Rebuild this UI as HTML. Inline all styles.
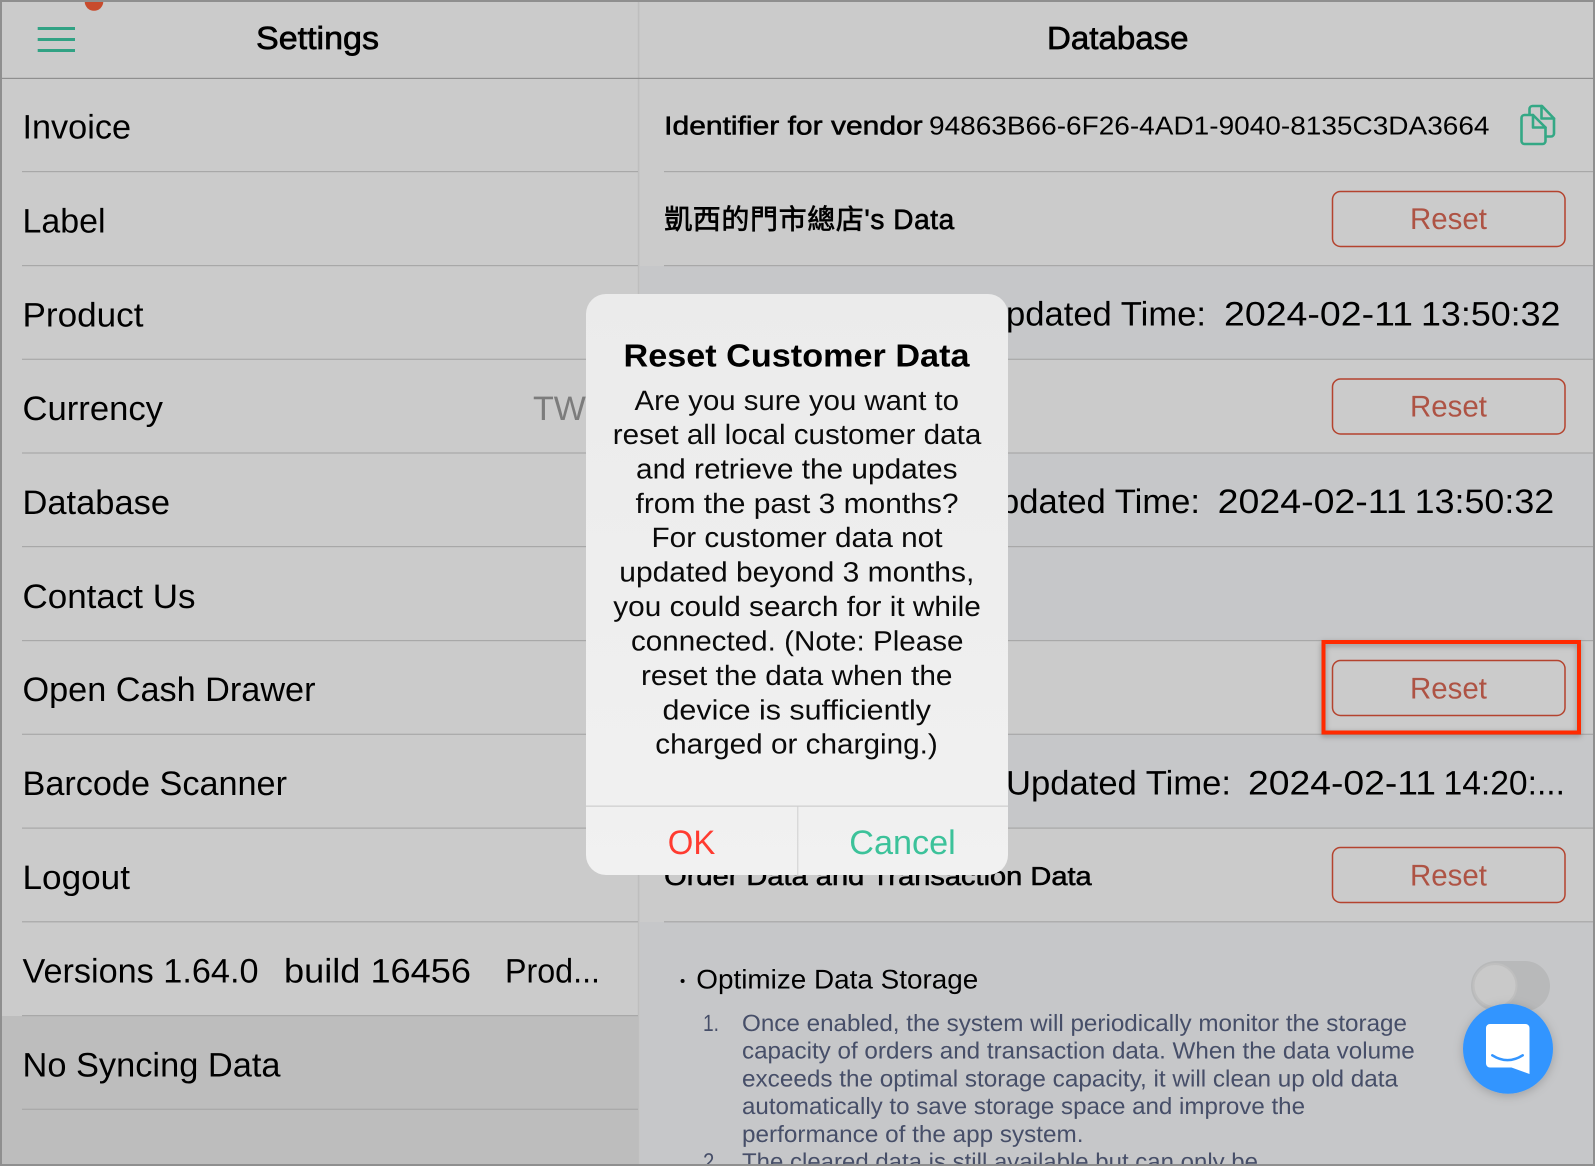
<!DOCTYPE html>
<html><head><meta charset="utf-8"><title>Settings</title>
<style>
html,body{margin:0;padding:0;background:#cbcbcb}
svg{display:block}
text{font-family:"Liberation Sans","Noto Sans CJK TC",sans-serif;text-rendering:geometricPrecision;fill:#000}
.r{font-size:34px}
.m{stroke:#000;stroke-width:.55px}
.s{font-size:26px}
.l{font-size:23.5px;fill:#464e68}
.d{font-size:28px;fill:#0a0a0a}
.b{font-size:30px;fill:#ae5344}
.line{fill:#a8a8a8}
.btn{fill:none;stroke:#b4432e;stroke-width:1.5}
</style></head><body>
<svg xmlns="http://www.w3.org/2000/svg" width="1595" height="1166" viewBox="0 0 1595 1166">
<defs>
<linearGradient id="dg" x1="0" y1="0" x2="0" y2="1"><stop offset="0" stop-color="#ebebeb"/><stop offset="1" stop-color="#f1f1f1"/></linearGradient>
<filter id="sh" x="-10%" y="-10%" width="120%" height="130%"><feDropShadow dx="0" dy="2" stdDeviation="3" flood-color="#000" flood-opacity=".3"/></filter>
<filter id="sh2" x="-30%" y="-30%" width="160%" height="160%"><feDropShadow dx="0" dy="2" stdDeviation="5" flood-color="#000" flood-opacity=".2"/></filter>
<clipPath id="clip"><rect x="0" y="0" width="1595" height="1164"/></clipPath>
</defs>
<rect width="1595" height="1166" fill="#cbcbcb"/>
<!-- right panel shades -->
<rect x="640" y="266" width="955" height="93" fill="#c6c7c9"/>
<rect x="640" y="453" width="955" height="187" fill="#c6c7c9"/>
<rect x="640" y="734" width="955" height="94" fill="#c6c7c9"/>
<rect x="640" y="922" width="955" height="244" fill="#c6c7c9"/>
<!-- selected row -->
<rect x="0" y="1016" width="638" height="150" fill="#bdbdbd"/>
<!-- divider -->
<rect x="637.800" y="0" width="1.600" height="1166" fill="#bebebe"/>
<!-- header line -->
<rect x="0" y="77.800" width="1595" height="1.200" fill="#8f8f8f"/>
<!-- sidebar lines -->
<rect class="line" x="22" y="171" width="616" height="1.200"/>
<rect class="line" x="22" y="265" width="616" height="1.200"/>
<rect class="line" x="22" y="358.700" width="616" height="1.200"/>
<rect class="line" x="22" y="452.400" width="616" height="1.200"/>
<rect class="line" x="22" y="546" width="616" height="1.200"/>
<rect class="line" x="22" y="640" width="616" height="1.200"/>
<rect class="line" x="22" y="733.700" width="616" height="1.200"/>
<rect class="line" x="22" y="827.500" width="616" height="1.200"/>
<rect class="line" x="22" y="921.200" width="616" height="1.200"/>
<rect class="line" x="22" y="1015" width="616" height="1.200"/>
<rect class="line" x="22" y="1108.700" width="616" height="1.200"/>
<!-- right lines -->
<rect class="line" x="664" y="171" width="931" height="1.200"/>
<rect class="line" x="664" y="265" width="931" height="1.200"/>
<rect class="line" x="664" y="358.700" width="931" height="1.200"/>
<rect class="line" x="664" y="452.400" width="931" height="1.200"/>
<rect class="line" x="664" y="546" width="931" height="1.200"/>
<rect class="line" x="664" y="640" width="931" height="1.200"/>
<rect class="line" x="664" y="733.700" width="931" height="1.200"/>
<rect class="line" x="664" y="827.500" width="931" height="1.200"/>
<rect class="line" x="664" y="921.200" width="931" height="1.200"/>
<!-- header -->
<rect x="37.700" y="27" width="37.300" height="3" fill="#31a284"/>
<rect x="37.700" y="38" width="37.300" height="3" fill="#31a284"/>
<rect x="37.700" y="49" width="37.300" height="3" fill="#31a284"/>
<circle cx="94" cy="1.500" r="9.300" fill="#c84b2d"/>
<text class="m" x="256" y="49" font-size="32" style="stroke-width:.7px" textLength="123" lengthAdjust="spacingAndGlyphs">Settings</text>
<text class="m" x="1047" y="49" font-size="32" style="stroke-width:.7px" textLength="141.500" lengthAdjust="spacingAndGlyphs">Database</text>
<!-- sidebar -->
<text class="r" x="22.500" y="138.700" textLength="108.500" lengthAdjust="spacingAndGlyphs">Invoice</text>
<text class="r" x="22.500" y="232.500" textLength="83" lengthAdjust="spacingAndGlyphs">Label</text>
<text class="r" x="22.500" y="326.400" textLength="121" lengthAdjust="spacingAndGlyphs">Product</text>
<text class="r" x="22.500" y="420.200" textLength="140.500" lengthAdjust="spacingAndGlyphs">Currency</text>
<text class="r" x="533" y="420.200" style="fill:#7c7c7c">TW</text>
<text class="r" x="22.500" y="514" textLength="147.500" lengthAdjust="spacingAndGlyphs">Database</text>
<text class="r" x="22.500" y="607.800" textLength="173" lengthAdjust="spacingAndGlyphs">Contact Us</text>
<text class="r" x="22.500" y="700.800" textLength="293" lengthAdjust="spacingAndGlyphs">Open Cash Drawer</text>
<text class="r" x="22.500" y="795" textLength="264.500" lengthAdjust="spacingAndGlyphs">Barcode Scanner</text>
<text class="r" x="22.500" y="889" textLength="107.500" lengthAdjust="spacingAndGlyphs">Logout</text>
<text class="r" x="22.500" y="982.700" textLength="236" lengthAdjust="spacingAndGlyphs">Versions 1.64.0</text>
<text class="r" x="284" y="982.700" textLength="187" lengthAdjust="spacingAndGlyphs">build 16456</text>
<text class="r" x="505" y="982.700" textLength="95" lengthAdjust="spacingAndGlyphs">Prod...</text>
<text class="r" x="22.500" y="1076.500" textLength="258" lengthAdjust="spacingAndGlyphs">No Syncing Data</text>
<!-- right content -->
<text class="s m" x="664.200" y="134.300" textLength="258.500" lengthAdjust="spacingAndGlyphs">Identifier for vendor</text>
<text class="s" x="929" y="134.300" textLength="560.500" lengthAdjust="spacingAndGlyphs">94863B66-6F26-4AD1-9040-8135C3DA3664</text>
<g fill="none" stroke="#34a885" stroke-width="2.600" stroke-linejoin="round" stroke-linecap="round">
<path d="M1529.500 114V109a3 3 0 0 1 3-3h9.500L1554 118.500V133.500a3 3 0 0 1-3 3h-5"/>
<path d="M1541.500 106v12.500H1554"/>
<path d="M1524.500 115h8.500L1545.500 127.500V141a3 3 0 0 1-3 3H1524.500a3 3 0 0 1-3-3V118a3 3 0 0 1 3-3z"/>
<path d="M1533 115v12.500h12.500"/>
</g>
<text class="s m" x="664.200" y="229" style="font-size:28px;stroke-width:.65px" textLength="290">凱西的門市總店's Data</text>
<rect class="btn" x="1332.500" y="191.500" width="232.500" height="55" rx="8"/>
<text class="b" x="1410" y="229" textLength="77" lengthAdjust="spacingAndGlyphs">Reset</text>
<text class="r" x="981" y="325.500" textLength="225" lengthAdjust="spacingAndGlyphs">Updated Time:</text>
<text class="r" x="1224" y="325.500" textLength="189" lengthAdjust="spacingAndGlyphs">2024-02-11</text>
<text class="r" x="1421" y="325.500" textLength="139.500" lengthAdjust="spacingAndGlyphs">13:50:32</text>
<rect class="btn" x="1332.500" y="379" width="232.500" height="55" rx="8"/>
<text class="b" x="1410" y="416.500" textLength="77" lengthAdjust="spacingAndGlyphs">Reset</text>
<text class="r" x="975" y="513" textLength="225" lengthAdjust="spacingAndGlyphs">Updated Time:</text>
<text class="r" x="1217.700" y="513" textLength="189" lengthAdjust="spacingAndGlyphs">2024-02-11</text>
<text class="r" x="1414.700" y="513" textLength="139.500" lengthAdjust="spacingAndGlyphs">13:50:32</text>
<rect class="btn" x="1332.500" y="660.500" width="232.500" height="55" rx="8"/>
<text class="b" x="1410" y="698.300" textLength="77" lengthAdjust="spacingAndGlyphs">Reset</text>
<rect x="1323.500" y="642" width="255.500" height="90.500" fill="none" stroke="#ff2a00" stroke-width="4" filter="url(#sh)"/>
<text class="r" x="1006" y="794.500" textLength="225" lengthAdjust="spacingAndGlyphs">Updated Time:</text>
<text class="r" x="1248" y="794.500" textLength="188" lengthAdjust="spacingAndGlyphs">2024-02-11</text>
<text class="r" x="1443.500" y="794.500" textLength="121.500" lengthAdjust="spacingAndGlyphs">14:20:...</text>
<text class="s m" x="664.200" y="885" textLength="427.500" lengthAdjust="spacingAndGlyphs">Order Data and Transaction Data</text>
<rect class="btn" x="1332.500" y="847.500" width="232.500" height="55" rx="8"/>
<text class="b" x="1410" y="885.700" textLength="77" lengthAdjust="spacingAndGlyphs">Reset</text>
<circle cx="682.600" cy="981" r="2" fill="#000"/>
<text x="696.300" y="988.300" font-size="27" textLength="282" lengthAdjust="spacingAndGlyphs">Optimize Data Storage</text>
<text class="l" x="703" y="1031" textLength="16" lengthAdjust="spacingAndGlyphs">1.</text>
<text class="l" x="742" y="1031" textLength="665" lengthAdjust="spacingAndGlyphs">Once enabled, the system will periodically monitor the storage</text>
<text class="l" x="742" y="1058.500" textLength="672.700" lengthAdjust="spacingAndGlyphs">capacity of orders and transaction data. When the data volume</text>
<text class="l" x="742" y="1086.300" textLength="656" lengthAdjust="spacingAndGlyphs">exceeds the optimal storage capacity, it will clean up old data</text>
<text class="l" x="742" y="1114" textLength="563" lengthAdjust="spacingAndGlyphs">automatically to save storage space and improve the</text>
<text class="l" x="742" y="1142" textLength="341.500" lengthAdjust="spacingAndGlyphs">performance of the app system.</text>
<g clip-path="url(#clip)">
<text class="l" x="703" y="1169.500" textLength="17" lengthAdjust="spacingAndGlyphs">2.</text>
<text class="l" x="742" y="1169.500" textLength="516" lengthAdjust="spacingAndGlyphs">The cleared data is still available but can only be</text>
</g>
<!-- toggle -->
<rect x="1471" y="961" width="79" height="50" rx="25" fill="#b8b9ba"/>
<circle cx="1495" cy="985.500" r="21.500" fill="#c9c9c9" stroke="#bfbfbf" stroke-width="2"/>
<!-- chat -->
<circle cx="1508" cy="1048.700" r="45" fill="#3395ff" filter="url(#sh2)"/>
<path d="M1490 1024h35.500a4 4 0 0 1 4 4v46l-18-6.500h-21.500a4 4 0 0 1-4-4v-35.500a4 4 0 0 1 4-4z" fill="#fff"/>
<path d="M1492.300 1055.300Q1507.500 1065 1522.700 1055.300" fill="none" stroke="#3395ff" stroke-width="2.500" stroke-linecap="round"/>
<!-- dialog -->
<rect x="586" y="294" width="422" height="581" rx="20" fill="url(#dg)"/>
<text x="623.500" y="366.700" font-size="32" font-weight="700" textLength="346" lengthAdjust="spacingAndGlyphs">Reset Customer Data</text>
<text class="d" x="634.500" y="410" textLength="324.500" lengthAdjust="spacingAndGlyphs">Are you sure you want to</text>
<text class="d" x="612.800" y="444.200" textLength="368.500" lengthAdjust="spacingAndGlyphs">reset all local customer data</text>
<text class="d" x="636" y="478.600" textLength="321.500" lengthAdjust="spacingAndGlyphs">and retrieve the updates</text>
<text class="d" x="635.500" y="512.800" textLength="323" lengthAdjust="spacingAndGlyphs">from the past 3 months?</text>
<text class="d" x="651.500" y="547.200" textLength="291" lengthAdjust="spacingAndGlyphs">For customer data not</text>
<text class="d" x="619.300" y="581.600" textLength="355" lengthAdjust="spacingAndGlyphs">updated beyond 3 months,</text>
<text class="d" x="613.300" y="616" textLength="367.500" lengthAdjust="spacingAndGlyphs">you could search for it while</text>
<text class="d" x="631" y="650.500" textLength="332.500" lengthAdjust="spacingAndGlyphs">connected. (Note: Please</text>
<text class="d" x="641" y="685" textLength="311.500" lengthAdjust="spacingAndGlyphs">reset the data when the</text>
<text class="d" x="662.500" y="719.300" textLength="268.500" lengthAdjust="spacingAndGlyphs">device is sufficiently</text>
<text class="d" x="655.300" y="753.500" textLength="282.500" lengthAdjust="spacingAndGlyphs">charged or charging.)</text>
<rect x="586" y="805.500" width="422" height="1.300" fill="#cfcfcf"/>
<rect x="797.300" y="806" width="1" height="69" fill="#cfcfcf"/>
<text x="667.800" y="854" font-size="34" style="fill:#ff3b30" textLength="47.500" lengthAdjust="spacingAndGlyphs">OK</text>
<text x="849.300" y="854" font-size="34" style="fill:#3cc29a" textLength="106.500" lengthAdjust="spacingAndGlyphs">Cancel</text>
<!-- window frame -->
<rect x="0" y="0" width="1595" height="2" fill="#8f8f8f"/>
<rect x="0" y="0" width="2" height="1166" fill="#8f8f8f"/>
<rect x="1593" y="0" width="2" height="1166" fill="#8f8f8f"/>
<rect x="0" y="1164" width="1595" height="2" fill="#8f8f8f"/>
</svg>
</body></html>
